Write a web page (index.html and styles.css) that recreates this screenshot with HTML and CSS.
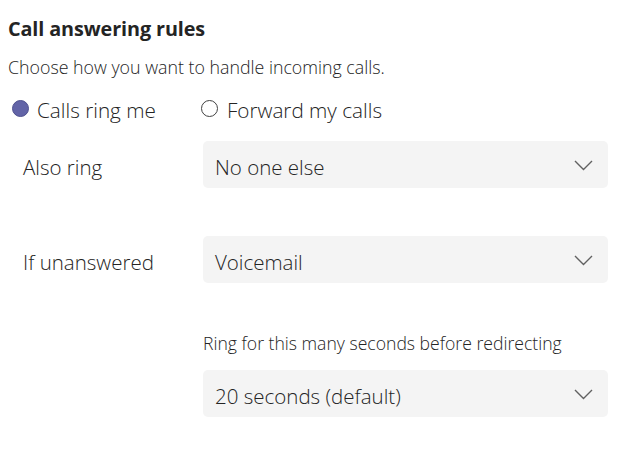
FILE: index.html
```html
<!DOCTYPE html>
<html>
<head>
<meta charset="utf-8">
<link rel="stylesheet" href="styles.css">
</head>
<body>
<div class="page">
  <h1 class="title">Call answering rules</h1>
  <p class="desc">Choose how you want to handle incoming calls.</p>
  <div class="radios">
    <label class="radio"><span class="dot checked"></span>Calls ring me</label>
    <label class="radio second"><span class="dot"></span>Forward my calls</label>
  </div>
  <div class="row">
    <div class="label">Also ring</div>
    <div class="select"><span class="val">No one else</span>
      <svg class="chev" width="19" height="11" viewBox="0 0 19 11"><path d="M1 1 L9.5 9.5 L18 1" fill="none" stroke="#616161" stroke-width="1.4"/></svg>
    </div>
  </div>
  <div class="row row2">
    <div class="label">If unanswered</div>
    <div class="select"><span class="val">Voicemail</span>
      <svg class="chev" width="19" height="11" viewBox="0 0 19 11"><path d="M1 1 L9.5 9.5 L18 1" fill="none" stroke="#616161" stroke-width="1.4"/></svg>
    </div>
  </div>
  <div class="sub">
    <div class="hint">Ring for this many seconds before redirecting</div>
    <div class="select"><span class="val">20 seconds (default)</span>
      <svg class="chev" width="19" height="11" viewBox="0 0 19 11"><path d="M1 1 L9.5 9.5 L18 1" fill="none" stroke="#616161" stroke-width="1.4"/></svg>
    </div>
  </div>
</div>
</body>
</html>
```
FILE: styles.css
```css
* { box-sizing: border-box; }
body {
  margin: 0;
  background: #ffffff;
  font-family: "Open Sans", "Noto Sans", sans-serif;
  font-weight: 360;
  color: #242424;
}
.page {
  padding: 15px 29px 0 8px;
}
.title {
  margin: 0;
  font-size: 19.8px;
  font-weight: 700;
  line-height: 28px;
  color: #242424;
  letter-spacing: -0.1px;
}
.desc {
  margin: 12px 0 0;
  font-size: 17.8px;
  line-height: 24px;
  color: #242424;
}
.radios {
  display: flex;
  margin-top: 18px;
  height: 24px;
  align-items: center;
}
.radio {
  display: flex;
  align-items: center;
  font-size: 20.7px;
  line-height: 24px;
  color: #242424;
  padding-top: 1px;
}
.radio .dot { margin-top: -2px; }
.radio.second {
  margin-left: 41px;
}
.dot {
  width: 17px;
  height: 17px;
  border-radius: 50%;
  border: 1px solid #424242;
  margin: 0 8px 0 4px;
  background: #fff;
}
.second .dot { margin-right: 9px; }
.dot.checked {
  background: #6264a7;
  border-color: #4f518f;
}
.row {
  display: flex;
  align-items: center;
  margin-top: 20px;
}
.row2 { margin-top: 48px; }
.label {
  width: 195px;
  padding-left: 15px;
  padding-top: 4px;
  font-size: 20.5px;
  color: #242424;
}
.select {
  width: 405px;
  height: 47px;
  background: #f4f4f4;
  border-radius: 5px;
  display: flex;
  align-items: center;
  justify-content: space-between;
  padding: 0 15px 0 12px;
  font-size: 20.5px;
  color: #242424;
}
.val { padding-top: 4px; }
.chev { display: block; margin-top: 1px; }
.sub {
  margin-left: 195px;
  margin-top: 48px;
}
.hint {
  font-size: 17.6px;
  line-height: 24px;
  color: #242424;
  margin-bottom: 15px;
}
```
